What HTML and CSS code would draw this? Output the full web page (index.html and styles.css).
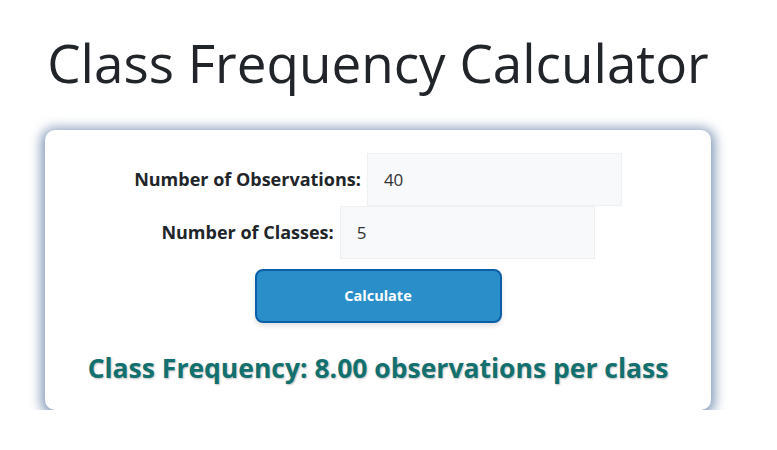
FILE: index.html
```html
<!DOCTYPE html>
<html lang="en">
<head>
    <meta charset="UTF-8">
    <meta name="viewport" content="width=device-width, initial-scale=1.0">
    <title>Class Frequency Calculator</title>
    <link rel="stylesheet" href="styles.css">
</head>
<body>

    <div class="page">
        <h1>Class Frequency Calculator</h1>

        <div class="card">
            <div class="field">
                <label for="observations">Number of Observations:</label>
                <input type="number" id="observations" value="40">
            </div>
            <div class="field">
                <label for="classes">Number of Classes:</label>
                <input type="number" id="classes" value="5">
            </div>
            <button type="button" onclick="calculate()">Calculate</button>
            <p id="result" class="result">Class Frequency: 8.00 observations per class</p>
        </div>
    </div>

    <script>
        function calculate() {
            var n = parseFloat(document.getElementById('observations').value);
            var k = parseFloat(document.getElementById('classes').value);
            if (!n || !k) {
                document.getElementById('result').textContent = 'Please enter valid numbers.';
                return;
            }
            document.getElementById('result').textContent =
                'Class Frequency: ' + (n / k).toFixed(2) + ' observations per class';
        }
    </script>
</body>
</html>
```

FILE: styles.css
```css
body {
    font-family: "Open Sans", "Noto Sans", sans-serif;
    color: #212529;
    background-color: #fff;
    margin: 0;
}
.page {
    width: 756px;
    box-sizing: border-box;
    padding: 0 45px;
}
h1 {
    font-size: 53px;
    font-weight: 400;
    text-align: center;
    margin: 31px 0 35px;
    line-height: 1.2;
}
.card {
    background: white;
    border-radius: 10px;
    box-shadow: 0 2px 12px 4px rgba(70, 105, 150, 0.65);
    padding: 23px 20px 26px;
    text-align: center;
}
.field {
    display: flex;
    justify-content: center;
    align-items: center;
    gap: 6px;
}
label {
    font-weight: 700;
    font-size: 18px;
}
input {
    width: 255px;
    height: 53px;
    box-sizing: border-box;
    padding: 0 16px;
    border: 1px solid #eef0f2;
    background-color: #f8f9fa;
    font-family: "Open Sans", "Noto Sans", sans-serif;
    font-size: 17px;
    color: #333;
}
input::-webkit-inner-spin-button {
    -webkit-appearance: none;
}
button {
    width: 247px;
    height: 54px;
    margin-top: 10px;
    background-color: #2a8fc9;
    color: white;
    border: 2px solid #0d5ea8;
    border-radius: 8px;
    font-family: "Open Sans", "Noto Sans", sans-serif;
    font-weight: 700;
    font-size: 14.5px;
    cursor: pointer;
    box-shadow: 0 3px 5px rgba(0, 0, 0, 0.12);
}
button:hover {
    background-color: #247fb4;
}
.result {
    color: #12706e;
    font-size: 26.5px;
    font-weight: 700;
    line-height: 1.2;
    margin: 30px 0 0;
    text-shadow: 1px 1px 2px rgba(0, 0, 0, 0.25);
}
```
